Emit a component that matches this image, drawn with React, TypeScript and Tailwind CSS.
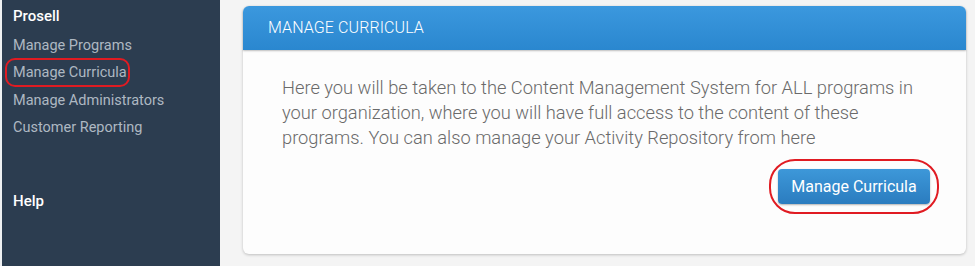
import React from "react";

const navItems = ["Manage Programs", "Manage Curricula", "Manage Administrators", "Customer Reporting"];

export default function App() {
  return (
    <div className="flex h-[266px] w-[975px] bg-[#f4f4f4] font-['Roboto',_'Liberation_Sans',_sans-serif]">
      {/* sidebar */}
      <aside className="relative w-[220px] shrink-0 border-l-2 border-[#eef0f2] bg-[#2c3d50] pl-[11px]">
        <div className="pt-[6px] text-[15px] font-medium leading-[20px] text-white">Prosell</div>
        <ul className="mt-[9px]">
          {navItems.map((item) => (
            <li key={item} className="h-[27.3px] text-[14.5px] leading-[22px] text-[#aeb8c2]">
              {item}
            </li>
          ))}
        </ul>
        <div className="mt-[47px] text-[15px] font-medium leading-[20px] text-white">Help</div>
        <div className="absolute left-[3px] top-[58px] h-[29px] w-[125px] rounded-[10px] border-2 border-[#e01b22]" />
      </aside>

      {/* main */}
      <main className="flex-1 pl-[23px] pr-[9px] pt-[6px]">
        <section className="relative flex h-[248px] flex-col rounded-[6px] bg-[#fdfdfd] shadow-[0_1px_3px_rgba(0,0,0,0.22)]">
          <header className="flex h-[44px] items-center rounded-t-[6px] bg-gradient-to-b from-[#3b98de] to-[#2a87cf] pl-[25px] shadow-[0_1px_2px_rgba(0,0,0,0.25)]">
            <h2 className="text-[16px] font-light tracking-[0.1px] text-white">MANAGE CURRICULA</h2>
          </header>
          <div className="flex flex-1 flex-col pl-[39px] pr-[36px] pt-[25px]">
            <p className="text-[18.3px] font-light leading-[25px] text-[#6a6a6a]">
              Here you will be taken to the Content Management System for ALL programs in your organization, where you
              will have full access to the content of these programs. You can also manage your Activity Repository from here
            </p>
            <div className="mt-[19px] flex justify-end">
              <div className="relative">
                <button className="h-[35px] w-[152px] rounded-[4px] bg-gradient-to-b from-[#3d98d9] to-[#2b7cbf] text-[16px] text-white shadow-[0_1px_2px_rgba(0,0,0,0.3)]">
                  Manage Curricula
                </button>
                <div className="absolute -left-[9px] -top-[10px] h-[55px] w-[170px] rounded-[26px] border-2 border-[#e01b22]" />
              </div>
            </div>
          </div>
        </section>
      </main>
    </div>
  );
}
